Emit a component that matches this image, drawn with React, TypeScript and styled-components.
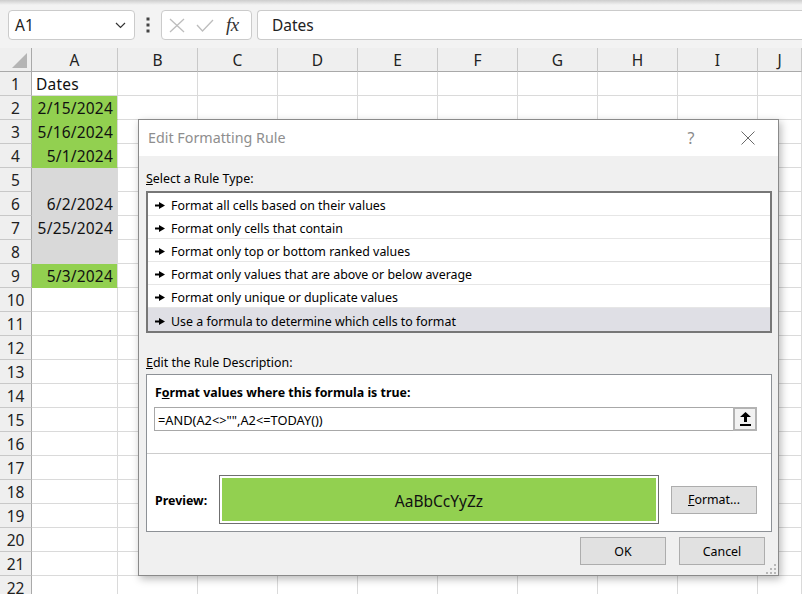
import React from "react";
import styled, { createGlobalStyle } from "styled-components";

const GlobalStyle = createGlobalStyle`
  html, body { margin: 0; padding: 0; background: #fff; overflow: hidden; }
  body { font-family: "Noto Sans", "Segoe UI", sans-serif; }
`;

const Page = styled.div`
  position: relative;
  width: 802px;
  height: 594px;
  overflow: hidden;
  background: #fff;
`;

const TopArea = styled.div`
  box-sizing: border-box;
  height: 48px;
  padding: 10px 0 0 8px;
  background: linear-gradient(to bottom, #cdcdcd 0px, #f3f3f3 5px, #f3f3f3 100%);
`;

const FormulaBar = styled.div`
  display: flex;
  align-items: stretch;
  height: 30px;
`;

const NameBox = styled.div`
  box-sizing: border-box;
  width: 127px;
  display: flex;
  align-items: center;
  justify-content: space-between;
  padding: 0 8px 0 6px;
  background: #fff;
  border: 1px solid #cbcbcb;
  border-radius: 4px;
  font-size: 15.5px;
  color: #222;
`;

const DotsBox = styled.div`
  width: 26px;
  display: flex;
  align-items: center;
  justify-content: center;
`;

const FxBox = styled.div`
  box-sizing: border-box;
  width: 91px;
  display: flex;
  align-items: center;
  gap: 11px;
  padding-left: 7px;
  background: #fff;
  border: 1px solid #cbcbcb;
  border-radius: 4px;
`;

const FxText = styled.span`
  font-family: "Liberation Serif", "DejaVu Serif", serif;
  font-style: italic;
  font-size: 19px;
  color: #333;
  margin-left: 1px;
  letter-spacing: -0.5px;
`;

const FormulaInput = styled.div`
  box-sizing: border-box;
  flex: 1;
  margin-left: 5px;
  display: flex;
  align-items: center;
  padding-left: 14px;
  background: #fff;
  border: 1px solid #cbcbcb;
  border-right: none;
  border-radius: 4px 0 0 4px;
  font-size: 15.5px;
  color: #222;
`;

const Row = styled.div`
  display: grid;
  grid-template-columns: 32px 86px repeat(8, 80px) 1fr;
`;

const Corner = styled.div`
  box-sizing: border-box;
  height: 24px;
  background: #efefef;
  border-right: 1px solid #a9a9a9;
  border-bottom: 1px solid #a9a9a9;
  display: flex;
  align-items: flex-end;
  justify-content: flex-end;
  padding: 0 4px 3px 0;
`;

const ColHead = styled.div`
  box-sizing: border-box;
  height: 24px;
  background: #efefef;
  border-right: 1px solid #c8c8c8;
  border-bottom: 1px solid #a9a9a9;
  display: flex;
  align-items: center;
  justify-content: center;
  font-size: 15.5px;
  color: #222;
`;

const RowHead = styled.div`
  box-sizing: border-box;
  height: 24px;
  background: #efefef;
  border-right: 1px solid #a9a9a9;
  border-bottom: 1px solid #c8c8c8;
  display: flex;
  align-items: center;
  justify-content: center;
  font-size: 15.5px;
  color: #222;
`;

const Cell = styled.div<{ $fill?: string; $right?: boolean }>`
  box-sizing: border-box;
  height: 24px;
  border-right: 1px solid #dadada;
  border-bottom: 1px solid ${(p) => p.$fill ?? "#dadada"};
  background: ${(p) => p.$fill ?? "#fff"};
  display: flex;
  align-items: center;
  justify-content: ${(p) => (p.$right ? "flex-end" : "flex-start")};
  padding: 0 4px;
  font-size: 15.5px;
  letter-spacing: 0.2px;
  color: #111;
  white-space: nowrap;
  overflow: hidden;
`;

/* Dialog */
const Dialog = styled.div`
  position: absolute;
  left: 138px;
  top: 119px;
  width: 641px;
  height: 457px;
  box-sizing: border-box;
  border: 1px solid #8a8a8a;
  background: #f0f0f0;
  box-shadow: 2px 3px 8px rgba(0, 0, 0, 0.28);
  display: flex;
  flex-direction: column;
  font-size: 12.4px;
  color: #000;
`;

const TitleBar = styled.div`
  height: 36px;
  flex: none;
  background: #fff;
  display: flex;
  align-items: center;
  padding-left: 9px;
`;

const Title = styled.div`
  flex: 1;
  font-size: 14.3px;
  color: #8e8e8e;
  margin-top: -1px;
`;

const HelpMark = styled.div`
  width: 20px;
  text-align: center;
  font-size: 16px;
  color: #8a8a8a;
  margin-right: 37px;
  margin-top: -1px;
`;

const CloseBox = styled.div`
  width: 20px;
  display: flex;
  justify-content: center;
  margin-right: 20px;
`;

const Body = styled.div`
  flex: 1;
  display: flex;
  flex-direction: column;
  padding: 0 6px 0 7px;
  position: relative;
`;

const SectionLabel = styled.div<{ $top: number; $bottom: number }>`
  line-height: 18px;
  height: 18px;
  margin-top: ${(p) => p.$top}px;
  margin-bottom: ${(p) => p.$bottom}px;
`;

const List = styled.div`
  box-sizing: border-box;
  height: 142px;
  border: 2px solid #777;
  background: #fff;
  display: flex;
  flex-direction: column;
`;

const ListItem = styled.div<{ $selected?: boolean; $last?: boolean }>`
  box-sizing: border-box;
  height: 23px;
  flex: none;
  display: flex;
  align-items: center;
  gap: 6px;
  padding: 3px 0 0 7px;
  border-bottom: ${(p) => (p.$last ? "none" : "1px solid #e6e6e6")};
  background: ${(p) => (p.$selected ? "#dfdfe5" : "#fff")};
  white-space: nowrap;
`;

const DescBox = styled.div`
  box-sizing: border-box;
  height: 158px;
  border: 1px solid #8d9196;
  background: #fff;
  display: flex;
  flex-direction: column;
`;

const BoldLabel = styled.div`
  font-weight: bold;
  line-height: 18px;
  margin: 9px 0 0 8px;
`;

const InputRow = styled.div`
  display: flex;
  margin: 5px 0 0 7px;
  height: 24px;
`;

const RuleInput = styled.div`
  box-sizing: border-box;
  width: 579px;
  height: 24px;
  border: 1px solid #a8a8a8;
  border-right: none;
  display: flex;
  align-items: center;
  padding: 2px 0 0 3px;
  font-size: 12.8px;
  white-space: nowrap;
`;

const CollapseButton = styled.div`
  box-sizing: border-box;
  width: 24px;
  height: 24px;
  border: 2px solid #b3b3b3;
  background: #f2f2f2;
  display: flex;
  align-items: center;
  justify-content: center;
`;

const Separator = styled.div`
  height: 1px;
  background: #cdcdcd;
  margin-top: 22px;
`;

const PreviewRow = styled.div`
  display: flex;
  align-items: center;
  margin-top: 21px;
  padding-left: 8px;
`;

const PreviewLabel = styled.div`
  width: 64px;
  font-weight: bold;
  padding-top: 2px;
`;

const PreviewBox = styled.div`
  box-sizing: border-box;
  width: 440px;
  height: 49px;
  border: 1px solid #6f6f6f;
  padding: 2px;
  background: #fff;
`;

const PreviewFill = styled.div`
  box-sizing: border-box;
  height: 100%;
  background: #92d050;
  display: flex;
  align-items: center;
  justify-content: center;
  padding-top: 2px;
  font-size: 15.5px;
  color: #111;
`;

const Button = styled.div<{ $ml?: number }>`
  box-sizing: border-box;
  width: 86px;
  height: 28px;
  margin-left: ${(p) => p.$ml ?? 0}px;
  background: #e1e1e1;
  border: 1px solid #adadad;
  display: flex;
  align-items: center;
  justify-content: center;
  font-size: 12.4px;
  color: #000;
`;

const ButtonRow = styled.div`
  display: flex;
  justify-content: flex-end;
  margin-top: 5px;
  padding-right: 7px;
`;

const Grip = styled.div`
  position: absolute;
  right: 1px;
  bottom: 1px;
  line-height: 0;
`;

const Arrow = () => (
  <svg width="10" height="7" viewBox="0 0 10 7">
    <rect x="0" y="2.5" width="5" height="2" fill="#000" />
    <polygon points="4,0 10,3.5 4,7" fill="#000" />
  </svg>
);

const rules = [
  "Format all cells based on their values",
  "Format only cells that contain",
  "Format only top or bottom ranked values",
  "Format only values that are above or below average",
  "Format only unique or duplicate values",
  "Use a formula to determine which cells to format",
];

const GREEN = "#92d050";
const GREY = "#d9d9d9";

const colA: Record<number, { v: string; fill?: string; right?: boolean }> = {
  1: { v: "Dates" },
  2: { v: "2/15/2024", fill: GREEN, right: true },
  3: { v: "5/16/2024", fill: GREEN, right: true },
  4: { v: "5/1/2024", fill: GREEN, right: true },
  5: { v: "", fill: GREY, right: true },
  6: { v: "6/2/2024", fill: GREY, right: true },
  7: { v: "5/25/2024", fill: GREY, right: true },
  8: { v: "", fill: GREY, right: true },
  9: { v: "5/3/2024", fill: GREEN, right: true },
};

const COLS = ["A", "B", "C", "D", "E", "F", "G", "H", "I", "J"];
const ROWS = Array.from({ length: 22 }, (_, i) => i + 1);

export default function App() {
  return (
    <Page>
      <GlobalStyle />
      <TopArea>
        <FormulaBar>
          <NameBox>
            <span>A1</span>
            <svg width="11" height="7" viewBox="0 0 11 7">
              <polyline points="1,1 5.5,5.5 10,1" fill="none" stroke="#333" strokeWidth="1.2" />
            </svg>
          </NameBox>
          <DotsBox>
            <svg width="4" height="16" viewBox="0 0 4 16">
              <rect x="0.5" y="0.5" width="3" height="3" fill="#444" />
              <rect x="0.5" y="6.5" width="3" height="3" fill="#444" />
              <rect x="0.5" y="12.5" width="3" height="3" fill="#444" />
            </svg>
          </DotsBox>
          <FxBox>
            <svg width="16" height="15" viewBox="0 0 16 15">
              <line x1="1" y1="1" x2="15" y2="14" stroke="#bdbdbd" strokeWidth="1.3" />
              <line x1="15" y1="1" x2="1" y2="14" stroke="#bdbdbd" strokeWidth="1.3" />
            </svg>
            <svg width="18" height="13" viewBox="0 0 18 13">
              <polyline points="1,6 6.5,12 17,1" fill="none" stroke="#bdbdbd" strokeWidth="1.3" />
            </svg>
            <FxText>fx</FxText>
          </FxBox>
          <FormulaInput>Dates</FormulaInput>
        </FormulaBar>
      </TopArea>

      <Row>
        <Corner>
          <svg width="15" height="15" viewBox="0 0 15 15">
            <polygon points="15,0 15,15 0,15" fill="#b5b5b5" />
          </svg>
        </Corner>
        {COLS.map((c) => (
          <ColHead key={c}>{c}</ColHead>
        ))}
      </Row>

      {ROWS.map((r) => {
        const a = colA[r];
        return (
          <Row key={r}>
            <RowHead>{r}</RowHead>
            <Cell $fill={a?.fill} $right={a?.right}>
              {a?.v}
            </Cell>
            {COLS.slice(1).map((c) => (
              <Cell key={c} />
            ))}
          </Row>
        );
      })}

      <Dialog>
        <TitleBar>
          <Title>Edit Formatting Rule</Title>
          <HelpMark>?</HelpMark>
          <CloseBox>
            <svg width="14" height="14" viewBox="0 0 14 14">
              <line x1="0.5" y1="0.5" x2="13.5" y2="13.5" stroke="#6a6a6a" strokeWidth="1" />
              <line x1="13.5" y1="0.5" x2="0.5" y2="13.5" stroke="#6a6a6a" strokeWidth="1" />
            </svg>
          </CloseBox>
        </TitleBar>
        <Body>
          <SectionLabel $top={14} $bottom={3}>
            <u>S</u>elect a Rule Type:
          </SectionLabel>
          <List>
            {rules.map((r, i) => (
              <ListItem key={r} $selected={i === rules.length - 1} $last={i === rules.length - 1}>
                <Arrow />
                <span>{r}</span>
              </ListItem>
            ))}
          </List>
          <SectionLabel $top={21} $bottom={2}>
            <u>E</u>dit the Rule Description:
          </SectionLabel>
          <DescBox>
            <BoldLabel>
              F<u>o</u>rmat values where this formula is true:
            </BoldLabel>
            <InputRow>
              <RuleInput>=AND(A2&lt;&gt;"",A2&lt;=TODAY())</RuleInput>
              <CollapseButton>
                <svg width="11" height="14" viewBox="0 0 11 14">
                  <polygon points="5.5,0 11,5 7,5 7,10 4,10 4,5 0,5" fill="#000" />
                  <rect x="0" y="12" width="11" height="2" fill="#000" />
                </svg>
              </CollapseButton>
            </InputRow>
            <Separator />
            <PreviewRow>
              <PreviewLabel>Preview:</PreviewLabel>
              <PreviewBox>
                <PreviewFill>AaBbCcYyZz</PreviewFill>
              </PreviewBox>
              <Button $ml={12}>
                <span>
                  <u>F</u>ormat...
                </span>
              </Button>
            </PreviewRow>
          </DescBox>
          <ButtonRow>
            <Button>OK</Button>
            <Button $ml={13}>Cancel</Button>
          </ButtonRow>
          <Grip>
            <svg width="11" height="10" viewBox="0 0 11 10">
              <rect x="8" y="0" width="2" height="2" fill="#b8b8b8" />
              <rect x="4" y="4" width="2" height="2" fill="#b8b8b8" />
              <rect x="8" y="4" width="2" height="2" fill="#b8b8b8" />
              <rect x="0" y="8" width="2" height="2" fill="#b8b8b8" />
              <rect x="4" y="8" width="2" height="2" fill="#b8b8b8" />
              <rect x="8" y="8" width="2" height="2" fill="#b8b8b8" />
            </svg>
          </Grip>
        </Body>
      </Dialog>
    </Page>
  );
}
